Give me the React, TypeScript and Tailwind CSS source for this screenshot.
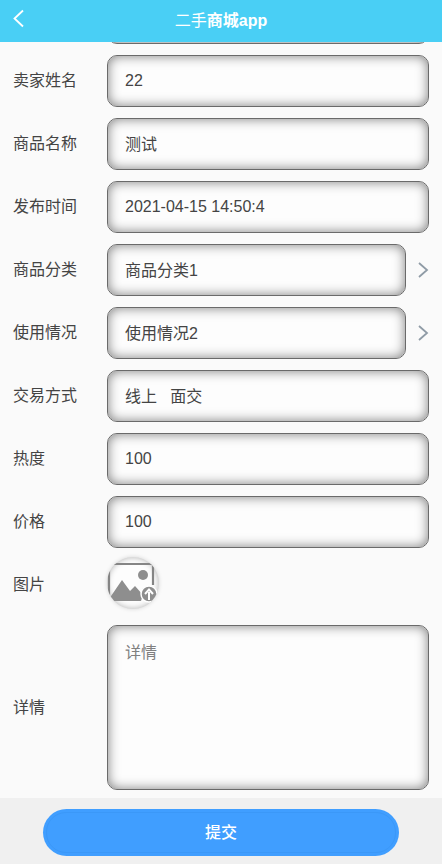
const font = { fontFamily: '"Liberation Sans","Noto Sans CJK SC",sans-serif' };

const boxCls =
  "flex items-center rounded-[10px] border border-[#6a6a6a] bg-[#fdfdfd] shadow-[inset_0_0_12px_rgba(0,0,0,0.5)] text-[16px] text-[#444444] h-[52px]";

function Row({ label, value, select, cjk }: { label: string; value: string; select?: boolean; cjk?: boolean }) {
  return (
    <div className="flex items-center pl-[13px] mb-[11px]">
      <div className="w-[94px] text-[16px] text-[#444444] leading-[24px]">{label}</div>
      {select ? (
        <>
          <div className={`${boxCls} w-[299px] pl-[17px] pt-[2px]`}>{value}</div>
          <svg className="ml-[11px]" width="12" height="18" viewBox="0 0 12 18" fill="none">
            <path d="M2 2 L10 9 L2 16" stroke="#8f9ba6" strokeWidth="1.8" />
          </svg>
        </>
      ) : (
        <div className={`${boxCls} w-[322px] pl-[17px] whitespace-pre ${cjk ? "pt-[2px]" : ""}`}>{value}</div>
      )}
    </div>
  );
}

export default function App() {
  return (
    <div className="w-[442px] h-[864px] flex flex-col overflow-hidden bg-[#fafafa]" style={font}>
      <header className="relative h-[42px] shrink-0 bg-[#49cff5] flex items-center justify-center z-10">
        <svg className="absolute left-[12px] top-[9px]" width="13" height="19" viewBox="0 0 13 19" fill="none">
          <path d="M11 1.5 L2.5 9.5 L11 17.5" stroke="#ffffff" strokeWidth="1.8" />
        </svg>
        <span className="text-[16px] text-white">
          二手<span className="font-bold">商城app</span>
        </span>
      </header>
      <main className="flex-1 overflow-hidden">
        <div className="-mt-[50px]">
          <Row label="" value="" />
          <Row label="卖家姓名" value="22" />
          <Row label="商品名称" value="测试" cjk />
          <Row label="发布时间" value="2021-04-15 14:50:4" />
          <Row label="商品分类" value="商品分类1" select />
          <Row label="使用情况" value="使用情况2" select />
          <Row label="交易方式" value="线上   面交" cjk />
          <Row label="热度" value="100" />
          <Row label="价格" value="100" />
          <div className="flex items-center pl-[13px] mb-[16px] -mt-[2px]">
            <div className="w-[94px] pt-[3px] text-[16px] text-[#444444]">图片</div>
            <div className="w-[52px] h-[52px] rounded-full bg-[#fdfdfd] shadow-[inset_0_0_6px_rgba(0,0,0,0.3),0_0_4px_rgba(0,0,0,0.15)] overflow-hidden">
              <svg width="52" height="52" viewBox="0 0 52 52">
                <path d="M2 7 H46 V28" fill="none" stroke="#858585" strokeWidth="2.2" />
                <path d="M2 7 V42" fill="none" stroke="#858585" strokeWidth="2.2" />
                <circle cx="36" cy="18" r="5" fill="#8e8e8e" />
                <path d="M2 42 L15 23 L23 34 L28 29 L36 38 L34 44 H2 Z" fill="#8e8e8e" />
                <circle cx="42" cy="37" r="8" fill="#8e8e8e" stroke="#ffffff" strokeWidth="1.5" />
                <path d="M42 43 V35 M38 37 L42 32.5 L46 37" fill="none" stroke="#ffffff" strokeWidth="2" />
              </svg>
            </div>
          </div>
          <div className="flex items-center pl-[13px]">
            <div className="w-[94px] text-[16px] text-[#444444]">详情</div>
            <div className="w-[322px] h-[165px] rounded-[10px] border border-[#6a6a6a] bg-[#fdfdfd] shadow-[inset_0_0_12px_rgba(0,0,0,0.5)] text-[16px] text-[#808080] pl-[17px] pt-[15px] leading-[24px]">
              详情
            </div>
          </div>
        </div>
      </main>
      <footer className="h-[66px] shrink-0 bg-[#f0f0f0] pl-[43px] pt-[11px]">
        <button className="relative w-[356px] h-[47px] rounded-full bg-[#409eff] text-white text-[16px] font-medium">
          <span className="absolute inset-[3px] rounded-[20px] border border-[#3b98f8]" />
          <span className="relative">提交</span>
        </button>
      </footer>
    </div>
  );
}
